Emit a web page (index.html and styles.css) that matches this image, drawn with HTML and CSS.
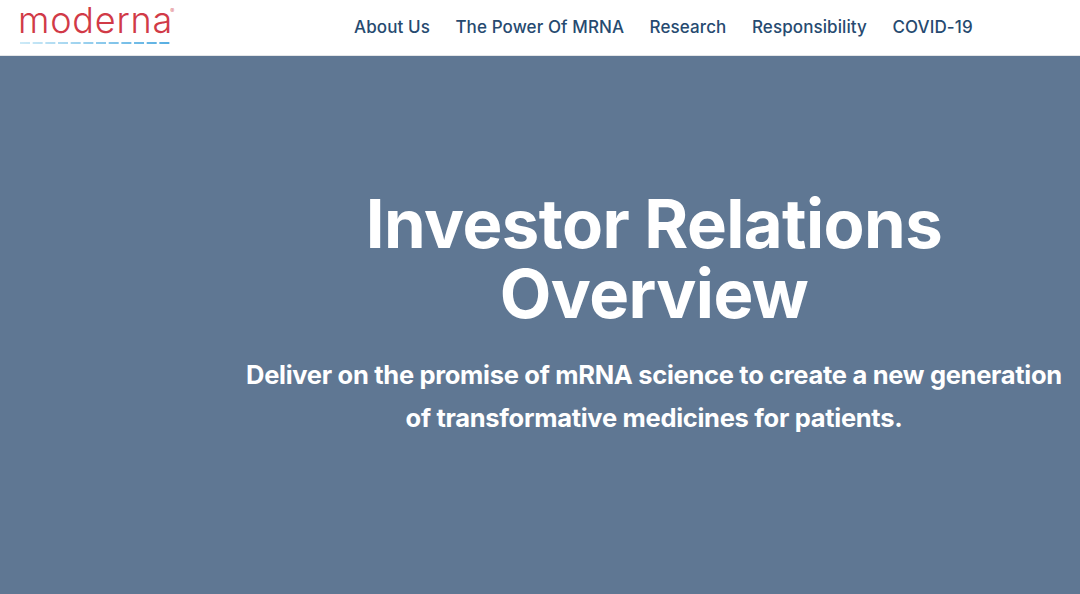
FILE: index.html
```html
<!DOCTYPE html>
<html lang="en">
<head>
    <meta charset="UTF-8">
    <title>Investor Relations Overview</title>
    <link rel="stylesheet" href="styles.css">
</head>
<body>
    <header class="site-header">
        <a class="logo" href="#">
            <span class="logo-text">moderna<sup class="logo-mark">®</sup></span>
            <svg class="logo-dashes" width="150" height="2" viewBox="0 0 150 2">
                <defs>
                    <linearGradient id="dash-fade" gradientUnits="userSpaceOnUse" x1="0" y1="0" x2="150" y2="0">
                        <stop offset="0" stop-color="#cdeaf7"/>
                        <stop offset="1" stop-color="#56aee2"/>
                    </linearGradient>
                </defs>
                <line x1="0" y1="1" x2="150" y2="1" stroke="url(#dash-fade)" stroke-width="2" stroke-dasharray="10 2.67"/>
            </svg>
        </a>
        <nav class="main-nav">
            <a href="#">About Us</a>
            <a href="#">The Power Of MRNA</a>
            <a href="#">Research</a>
            <a href="#">Responsibility</a>
            <a href="#">COVID-19</a>
        </nav>
    </header>
    <main class="hero">
        <h1>Investor Relations<br>Overview</h1>
        <p>Deliver on the promise of mRNA science to create a new generation<br>of transformative medicines for patients.</p>
    </main>
</body>
</html>
```

FILE: styles.css
```css
html, body {
    height: 100%;
}
body {
    font-family: Inter, "Liberation Sans", sans-serif;
    background-color: #5f7793;
    margin: 0;
    display: flex;
    flex-direction: column;
    overflow: hidden;
}
a {
    text-decoration: none;
    color: inherit;
}
.site-header {
    height: 56px;
    flex: none;
    box-sizing: border-box;
    background-color: #fff;
    border-bottom: 1px solid #e4e6e8;
    display: flex;
    align-items: flex-start;
    padding-left: 20px;
}
.logo {
    width: 334px;
    flex: none;
    display: flex;
    flex-direction: column;
}
.logo-text {
    font-weight: 300;
    font-size: 36px;
    line-height: 40px;
    height: 40px;
    letter-spacing: 0.8px;
    color: #d13a47;
    white-space: nowrap;
    margin-left: -2px;
}
.logo-mark {
    font-size: 6px;
    line-height: 0;
    vertical-align: 20px;
    letter-spacing: 0;
    margin-left: -3px;
}
.logo-dashes {
    display: block;
    margin-top: 1.5px;
}
.main-nav {
    display: flex;
    gap: 25.5px;
    font-size: 17px;
    font-weight: 500;
    line-height: 55px;
    letter-spacing: 0.1px;
    color: #264a70;
    white-space: nowrap;
}
.hero {
    flex: 1;
    color: #fff;
    text-align: center;
    padding-left: 228px;
    padding-top: 133px;
}
.hero h1 {
    margin: 0;
    font-size: 67px;
    font-weight: 700;
    line-height: 70px;
    letter-spacing: -0.6px;
}
.hero p {
    margin: 24px 0 0;
    font-size: 25.5px;
    font-weight: 700;
    line-height: 43px;
    letter-spacing: -0.3px;
    white-space: nowrap;
}
```
